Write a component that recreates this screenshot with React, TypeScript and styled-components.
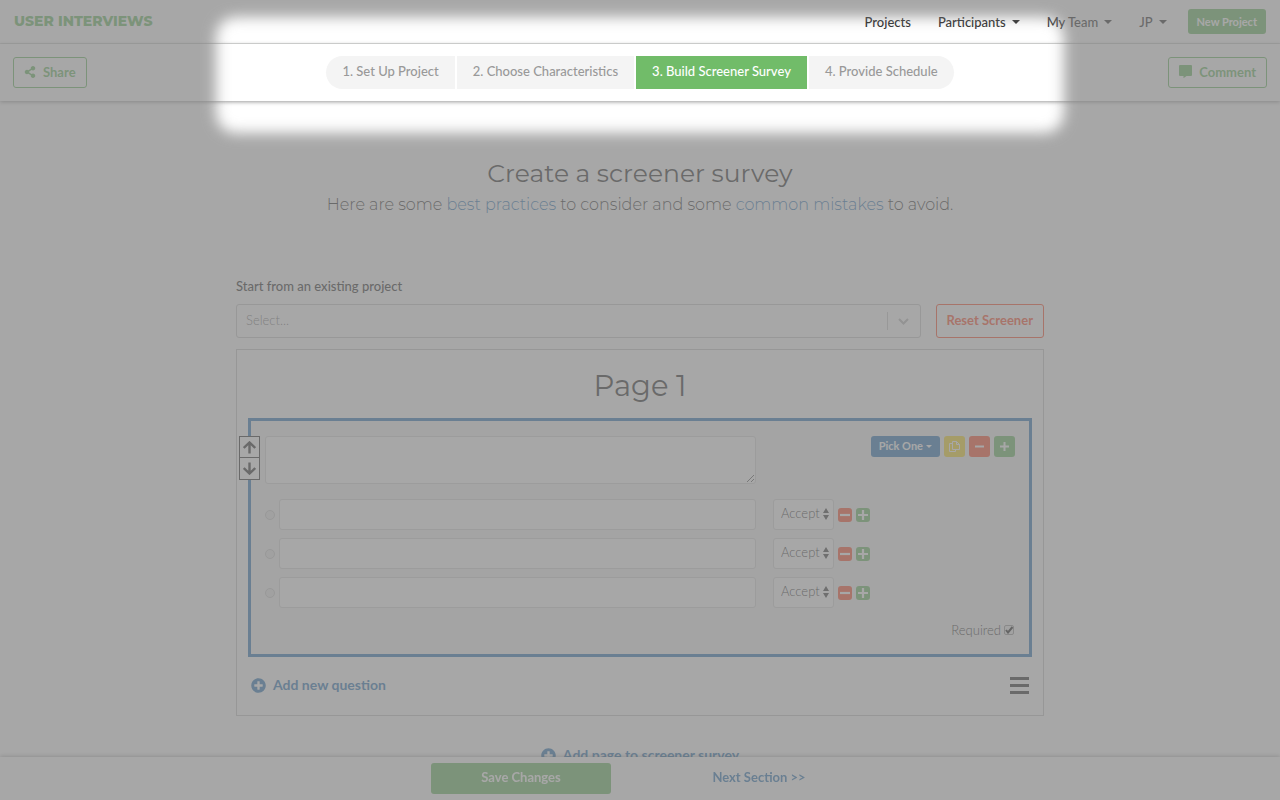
import React from "react";
import styled, { createGlobalStyle, css } from "styled-components";
import { FaShareAlt, FaPlusCircle } from "react-icons/fa";

const green = "#71bc69";
const blue = "#337ab7";
const red = "#fe5433";
const yellow = "#f9d92c";
const ink = "#333";
const line = "#d9d9d9";
const display = `Montserrat, Inter, sans-serif`;

const GlobalStyle = createGlobalStyle`
  *, *::before, *::after { box-sizing: border-box; }
  body {
    margin: 0;
    background: #fff;
    color: ${ink};
    font: 400 13px/20px Lato, sans-serif;
  }
  button, input, select, textarea { font: inherit; color: inherit; margin: 0; }
  button { cursor: pointer; }
  a { color: ${blue}; text-decoration: none; }
`;

const TopNav = styled.header`
  display: flex;
  align-items: center;
  justify-content: space-between;
  height: 44px;
  padding: 0 14px;
  border-bottom: 1px solid #dfe1df;
`;

const Logo = styled.a`
  padding-bottom: 2px;
  color: ${green};
  font: 800 14px/20px ${display};
`;

const NavList = styled.nav`
  display: flex;
  align-items: center;
  gap: 27px;
  font-weight: 500;
`;

const NavLink = styled.a`
  display: flex;
  align-items: center;
  gap: 6px;
  color: ${ink};
`;

const Caret = styled.span`
  border: 4px solid transparent;
  border-top-color: currentColor;
  border-bottom: 0;
`;

const NewProject = styled.button`
  height: 25px;
  margin-left: -6px;
  padding: 0 9px;
  border: 0;
  border-radius: 3px;
  background: ${green};
  color: #fff;
  font-size: 11px;
  font-weight: 700;
`;

const StepBar = styled.div`
  display: grid;
  grid-template-columns: 1fr auto 1fr;
  align-items: center;
  height: 57px;
  padding: 0 13px;
  box-shadow: 0 1px 4px rgba(0, 0, 0, 0.4);
`;

const OutlineButton = styled.button<{ $color: string; $tall?: boolean; $end?: boolean }>`
  display: flex;
  align-items: center;
  gap: 7px;
  height: ${(p) => (p.$tall ? 34 : 31)}px;
  padding: 0 10px 2px;
  justify-self: ${(p) => (p.$end ? "end" : "start")};
  border: 1px solid ${(p) => p.$color};
  border-radius: 3px;
  background: transparent;
  color: ${(p) => p.$color};
  font-weight: 700;
  white-space: nowrap;
`;

const Steps = styled.nav`
  display: flex;
  gap: 2px;
`;

const Step = styled.a<{ $active?: boolean }>`
  padding: 5px 16px 8px;
  background: ${(p) => (p.$active ? green : "#f4f4f4")};
  color: ${(p) => (p.$active ? "#fff" : "#999")};
  font-weight: 500;
  &:first-child { border-radius: 17px 0 0 17px; }
  &:last-child { border-radius: 0 17px 17px 0; }
`;

const Main = styled.main`
  max-width: 808px;
  margin: 0 auto;
  padding: 56px 0 24px;
`;

const Intro = styled.div`
  text-align: center;
  margin-bottom: 59px;
`;

const Title = styled.h1`
  margin: 0;
  font: 400 25px/32px ${display};
`;

const Subtitle = styled.p`
  margin: 4px 0 0;
  font: 300 16px/24px ${display};
`;

const Label = styled.label`
  display: block;
  margin-bottom: 8px;
  font-weight: 500;
`;

const StartRow = styled.div`
  display: flex;
  gap: 15px;
  margin-bottom: 11px;
`;

const SearchSelect = styled.div`
  display: flex;
  flex: 1;
  align-items: center;
  height: 34px;
  border: 1px solid #ccc;
  border-radius: 3px;
`;

const SearchInput = styled.input`
  flex: 1;
  min-width: 0;
  padding: 0 9px 2px;
  border: 0;
  outline: 0;
  background: transparent;
  font-weight: 300;
  &::placeholder { color: #808080; opacity: 1; }
`;

const SelectArrow = styled.span`
  display: flex;
  align-items: center;
  justify-content: center;
  width: 33px;
  height: 18px;
  border-left: 1px solid #ccc;
  color: #bbb;
`;

const PageCard = styled.section`
  padding: 16px 11px 20px;
  border: 1px solid #c8c8c8;
`;

const PageTitle = styled.h2`
  margin: 0 0 12px;
  text-align: center;
  font: 400 29px/40px ${display};
`;

const Question = styled.div`
  position: relative;
  padding: 15px 14px 14px;
  border: 3px solid ${blue};
  background: #f3f3f3;
`;

const Mover = styled.div`
  position: absolute;
  top: 15px;
  left: -12px;
  display: flex;
  flex-direction: column;
`;

const MoveButton = styled.button`
  display: flex;
  align-items: center;
  justify-content: center;
  width: 21px;
  height: 22px;
  padding: 0;
  border: 1px solid ${ink};
  background: #fff;
  & + & { height: 23px; margin-top: -1px; }
`;

const Columns = styled.div`
  display: flex;
  align-items: flex-start;
  gap: 17px;
`;

const fieldStyle = css`
  border: 1px solid ${line};
  border-radius: 3px;
  background: #fff;
`;

const Prompt = styled.textarea`
  ${fieldStyle}
  display: block;
  flex: 0 1 491px;
  min-width: 0;
  height: 48px;
  padding: 4px 8px;
`;

const Actions = styled.div`
  display: flex;
  gap: 4px;
  margin-left: auto;
`;

const ActionButton = styled.button<{ $color: string; $small?: boolean }>`
  display: flex;
  flex: none;
  align-items: center;
  justify-content: center;
  gap: 3px;
  min-width: ${(p) => (p.$small ? 14 : 21)}px;
  height: ${(p) => (p.$small ? 14 : 21)}px;
  padding: 0;
  border: 0;
  border-radius: 3px;
  background: ${(p) => p.$color};
  color: #fff;
`;

const TypeButton = styled(ActionButton)`
  padding: 0 8px 1px;
  font-size: 11px;
  font-weight: 700;
`;

const SmallCaret = styled(Caret)`
  border-width: 3px;
  border-bottom: 0;
`;

const Options = styled.div`
  display: flex;
  flex-direction: column;
  gap: 8px;
  margin: 15px 0 12px;
`;

const Answer = styled.div`
  display: flex;
  flex: 0 1 491px;
  align-items: center;
  gap: 4px;
  min-width: 0;
`;

const Radio = styled.input`
  appearance: none;
  flex: none;
  width: 10px;
  height: 10px;
  border: 1px solid #ccc;
  border-radius: 50%;
  background: #ebebeb;
`;

const AnswerInput = styled.input`
  ${fieldStyle}
  flex: 1;
  min-width: 0;
  height: 31px;
  padding: 0 8px;
`;

const Controls = styled.div`
  display: flex;
  align-items: center;
  gap: 4px;
`;

const SelectBox = styled.div`
  position: relative;
  svg {
    position: absolute;
    top: 9px;
    right: 5px;
    pointer-events: none;
  }
`;

const Verdict = styled.select`
  ${fieldStyle}
  appearance: none;
  display: block;
  width: 61px;
  height: 31px;
  padding: 0 0 3px 7px;
  font-weight: 300;
`;

const Required = styled.label`
  display: flex;
  align-items: center;
  justify-content: flex-end;
  gap: 3px;
  font-weight: 300;
`;

const Tick = styled.span`
  position: relative;
  display: flex;
  margin-right: 1px;
  svg { position: absolute; top: 1px; left: 1px; pointer-events: none; }
`;

const Check = styled.input`
  appearance: none;
  width: 10px;
  height: 10px;
  border: 1px solid #999;
  border-radius: 2px;
  background: #eee;
`;

const CardFoot = styled.div`
  display: flex;
  align-items: center;
  justify-content: space-between;
  padding: 18px 3px 0;
`;

const AddButton = styled.button`
  display: flex;
  align-items: center;
  gap: 7px;
  padding: 0;
  border: 0;
  background: transparent;
  color: ${blue};
  font-weight: 700;
  font-size: 14px;
  line-height: 20px;
`;

const AddPage = styled(AddButton)`
  margin: 29px auto 0;
`;

const DragHandle = styled.button`
  display: flex;
  padding: 0;
  border: 0;
  background: transparent;
`;

const Footer = styled.footer`
  position: fixed;
  right: 0;
  bottom: 0;
  left: 0;
  display: flex;
  align-items: center;
  justify-content: center;
  gap: 58px;
  height: 43px;
  background: #fff;
  box-shadow: 0 -1px 4px rgba(0, 0, 0, 0.3);
`;

const SaveButton = styled.button`
  width: 180px;
  height: 31px;
  padding: 0 0 3px;
  border: 0;
  border-radius: 3px;
  background: ${green};
  color: #fff;
  font-weight: 700;
`;

const NextLink = styled.a`
  width: 180px;
  padding-bottom: 3px;
  text-align: center;
  font-weight: 700;
`;

const Dimmer = styled.div`
  position: fixed;
  inset: 0;
  overflow: hidden;
  pointer-events: none;
`;

const Spotlight = styled.div`
  width: 848px;
  height: 116px;
  margin: 17px auto 0;
  border-radius: 20px;
  box-shadow: 0 0 0 2000px rgba(130, 130, 130, 0.7);
  filter: blur(7px);
`;

const CommentIcon = () => (
  <svg width="13" height="13" viewBox="0 0 13 13" fill="currentColor" aria-hidden="true">
    <path d="M1 0h11a1 1 0 0 1 1 1v9a1 1 0 0 1-1 1H7.500l-3 2.200V11H1a1 1 0 0 1-1-1V1a1 1 0 0 1 1-1z" />
  </svg>
);

const ChevronIcon = () => (
  <svg width="11" height="7" viewBox="0 0 11 7" fill="none" stroke="currentColor" strokeWidth="2" aria-hidden="true">
    <path d="M1 1l4.500 4.500L10 1" />
  </svg>
);

const ArrowIcon = ({ down }: { down?: boolean }) => (
  <svg width="13" height="13" viewBox="0 0 13 13" fill="none" stroke="currentColor" strokeWidth="2.400" aria-hidden="true">
    <path d={down ? "M6.500 0.500v11M0.800 6l5.700 5.500L12.200 6" : "M6.500 12.500v-11M0.800 7l5.700-5.500L12.200 7"} />
  </svg>
);

const CopyIcon = () => (
  <svg width="11" height="12" viewBox="0 0 11 12" fill="none" stroke="currentColor" aria-hidden="true">
    <path d="M3.500 0.500h4l3 3v5h-7zM7.500 0.500v3h3M3.500 2.500h-3v8h6v-2" />
  </svg>
);

const PlusIcon = ({ minus, size = 9 }: { minus?: boolean; size?: number }) => (
  <svg width={size} height={size} viewBox="0 0 9 9" fill="none" stroke="currentColor" strokeWidth="2" aria-hidden="true">
    <path d={minus ? "M0 4.500h9" : "M0 4.500h9M4.500 0v9"} />
  </svg>
);

const SortIcon = () => (
  <svg width="6" height="12" viewBox="0 0 6 12" fill="#444" aria-hidden="true">
    <path d="M3 0l3 5H0zM3 12L0 7h6z" />
  </svg>
);

const TickIcon = () => (
  <svg width="9" height="8" viewBox="0 0 9 8" fill="none" stroke="#222" strokeWidth="2" aria-hidden="true">
    <path d="M1 4l2 2.500L7.500 1" />
  </svg>
);

const BarsIcon = () => (
  <svg width="19" height="17" viewBox="0 0 19 17" fill={ink} aria-hidden="true">
    <path d="M0 0h19v3H0zM0 7h19v3H0zM0 14h19v3H0z" />
  </svg>
);

const stepNames = [
  "1. Set Up Project",
  "2. Choose Characteristics",
  "3. Build Screener Survey",
  "4. Provide Schedule",
];

export default function App() {
  return (
    <>
      <GlobalStyle />
      <TopNav>
        <Logo href="#">USER INTERVIEWS</Logo>
        <NavList>
          <NavLink href="#">Projects</NavLink>
          <NavLink href="#">Participants <Caret /></NavLink>
          <NavLink href="#">My Team <Caret /></NavLink>
          <NavLink href="#">JP <Caret /></NavLink>
          <NewProject>New Project</NewProject>
        </NavList>
      </TopNav>
      <StepBar>
        <OutlineButton $color={green}><FaShareAlt size={12} />Share</OutlineButton>
        <Steps>
          {stepNames.map((name, i) => (
            <Step key={name} href="#" $active={i === 2}>{name}</Step>
          ))}
        </Steps>
        <OutlineButton $color={green} $end><CommentIcon />Comment</OutlineButton>
      </StepBar>
      <Main>
        <Intro>
          <Title>Create a screener survey</Title>
          <Subtitle>
            Here are some <a href="#">best practices</a> to consider and some{" "}
            <a href="#">common mistakes</a> to avoid.
          </Subtitle>
        </Intro>
        <Label htmlFor="existing">Start from an existing project</Label>
        <StartRow>
          <SearchSelect>
            <SearchInput id="existing" placeholder="Select..." />
            <SelectArrow><ChevronIcon /></SelectArrow>
          </SearchSelect>
          <OutlineButton $color={red} $tall>Reset Screener</OutlineButton>
        </StartRow>
        <PageCard>
          <PageTitle>Page 1</PageTitle>
          <Question>
            <Mover>
              <MoveButton aria-label="Move up"><ArrowIcon /></MoveButton>
              <MoveButton aria-label="Move down"><ArrowIcon down /></MoveButton>
            </Mover>
            <Columns>
              <Prompt aria-label="Question" />
              <Actions>
                <TypeButton $color={blue}>Pick One <SmallCaret /></TypeButton>
                <ActionButton $color={yellow} aria-label="Copy question"><CopyIcon /></ActionButton>
                <ActionButton $color={red} aria-label="Remove question"><PlusIcon minus /></ActionButton>
                <ActionButton $color={green} aria-label="Add question"><PlusIcon /></ActionButton>
              </Actions>
            </Columns>
            <Options>
              {[1, 2, 3].map((n) => (
                <Columns key={n}>
                  <Answer>
                    <Radio type="radio" name="answer" aria-label={`Choose answer ${n}`} />
                    <AnswerInput aria-label={`Answer ${n}`} />
                  </Answer>
                  <Controls>
                    <SelectBox>
                      <Verdict aria-label={`Rule for answer ${n}`}>
                        <option>Accept</option>
                      </Verdict>
                      <SortIcon />
                    </SelectBox>
                    <ActionButton $small $color={red} aria-label="Remove answer"><PlusIcon minus size={10} /></ActionButton>
                    <ActionButton $small $color={green} aria-label="Add answer"><PlusIcon size={10} /></ActionButton>
                  </Controls>
                </Columns>
              ))}
            </Options>
            <Required>
              Required
              <Tick><Check type="checkbox" defaultChecked /><TickIcon /></Tick>
            </Required>
          </Question>
          <CardFoot>
            <AddButton><FaPlusCircle size={15} />Add new question</AddButton>
            <DragHandle aria-label="Reorder"><BarsIcon /></DragHandle>
          </CardFoot>
        </PageCard>
        <AddPage><FaPlusCircle size={15} />Add page to screener survey</AddPage>
      </Main>
      <Footer>
        <SaveButton>Save Changes</SaveButton>
        <NextLink href="#">Next Section &gt;&gt;</NextLink>
      </Footer>
      <Dimmer>
        <Spotlight />
      </Dimmer>
    </>
  );
}
